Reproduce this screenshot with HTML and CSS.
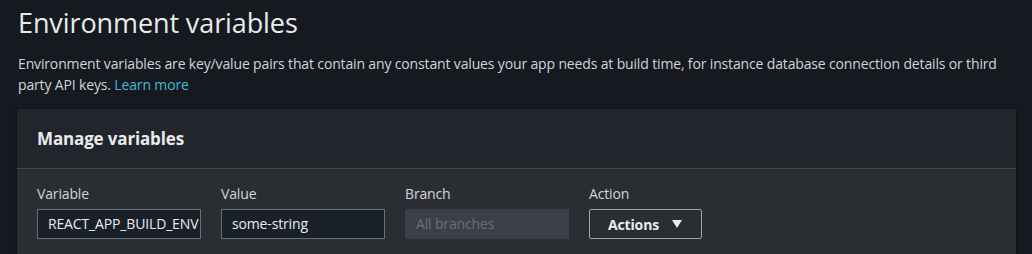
FILE: index.html
```html
<!DOCTYPE html>
<html>
<head>
<meta charset="utf-8">
<link rel="stylesheet" href="styles.css">
</head>
<body>
<div class="page">
  <h1 class="title">Environment variables</h1>
  <p class="desc">Environment variables are key/value pairs that contain any constant values your app needs at build time, for instance database connection details or third party API keys. <a class="link" href="#">Learn more</a></p>
  <section class="panel">
    <div class="panel-head">Manage variables</div>
    <div class="panel-body">
      <div class="field">
        <label class="label">Variable</label>
        <div class="input">REACT_APP_BUILD_ENV</div>
      </div>
      <div class="field">
        <label class="label">Value</label>
        <div class="input">some-string</div>
      </div>
      <div class="field">
        <label class="label">Branch</label>
        <div class="input disabled">All branches</div>
      </div>
      <div class="field">
        <label class="label">Action</label>
        <button class="btn">Actions <svg class="caret" width="12" height="10" viewBox="0 0 12 10"><path d="M1 1h10L6 9z" fill="#e9ebed"/></svg></button>
      </div>
    </div>
  </section>
</div>
</body>
</html>
```

FILE: styles.css
```css
html, body {
  margin: 0;
  padding: 0;
  background: #16191f;
  height: 100%;
}
body {
  font-family: "Open Sans", "Noto Sans", sans-serif;
  color: #d1d5db;
  overflow: hidden;
  letter-spacing: -0.15px;
}
.page {
  padding: 0 18px 0 18px;
}
.title {
  margin: 0;
  padding-top: 4px;
  font-size: 27px;
  font-weight: 400;
  line-height: 38px;
  color: #e9ebed;
  letter-spacing: -0.1px;
}
.desc {
  margin: 11px 0 0 0;
  font-size: 14px;
  line-height: 21px;
  color: #d1d5db;
}
.link {
  color: #44b9d6;
  text-decoration: none;
}
.panel {
  margin: 14px -2px 0 -1px;
  background: #2a2e33;
  box-shadow: 0 1px 3px rgba(0,0,0,0.5);
}
.panel-head {
  background: #22252b;
  height: 60px;
  box-sizing: border-box;
  padding: 0 20px;
  display: flex;
  align-items: center;
  font-size: 17px;
  font-weight: 700;
  color: #e9ebed;
  border-bottom: 1px solid #414750;
}
.panel-body {
  display: flex;
  gap: 20px;
  padding: 14px 20px 20px 20px;
}
.field {
  display: flex;
  flex-direction: column;
  gap: 4px;
}
.label {
  font-size: 14px;
  line-height: 22px;
  color: #d1d5db;
}
.input {
  width: 164px;
  height: 30px;
  box-sizing: border-box;
  border: 1px solid #687078;
  background: #1a2029;
  color: #e9ebed;
  font-size: 14px;
  line-height: 28px;
  padding: 0 10px;
  white-space: nowrap;
  overflow: hidden;
}
.input.disabled {
  background: #3b4048;
  border-color: #3b4048;
  color: #687078;
}
.btn {
  height: 30px;
  width: 113px;
  box-sizing: border-box;
  border: 1px solid #a0a6ad;
  border-radius: 2px;
  background: transparent;
  color: #e9ebed;
  font-family: inherit;
  letter-spacing: inherit;
  font-size: 14px;
  font-weight: 700;
  display: flex;
  align-items: center;
  justify-content: center;
  gap: 12px;
  padding: 0;
}
.caret {
  display: block;
}
```
